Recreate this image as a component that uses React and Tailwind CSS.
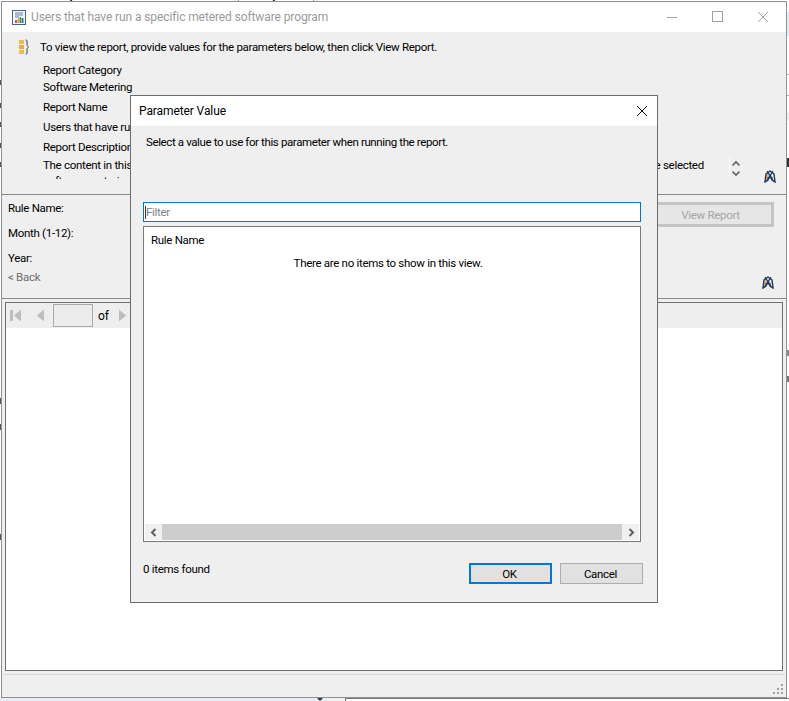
function MapIcon({ className }) {
  return (
    <svg viewBox="0 0 12 13" width="12" height="13" className={className}>
      <path d="M1 12 L3 2 L5 2 L3 12 Z" fill="#eeb050" />
      <path d="M7 4 L10 11 L8 11 Z" fill="#eeb050" />
      <path d="M1 12 L2 4 L6 1 L10 4 L11 12 L8 10 L6 5 L4 10 Z" stroke="#1d3868" strokeWidth="1.4" fill="none" />
      <path d="M3 1 L9 11 M9 1 L3 11 M3 8 H9" stroke="#1d3868" strokeWidth="1.1" fill="none" />
    </svg>
  );
}

function Tri({ dir, color = "#bdbdbd", bar }) {
  return (
    <svg width="12" height="13" viewBox="0 0 12 13" className="shrink-0">
      {bar && <rect x="0" y="1" width="3" height="11" fill={color} />}
      {dir === "left" ? <path d="M11 0.5 V12.5 L4 6.5 Z" fill={color} /> : <path d="M2 0.5 V12.5 L9 6.5 Z" fill={color} />}
    </svg>
  );
}

function ScrollArrow({ dir }) {
  return (
    <div className="w-[17px] h-[16px] flex items-center justify-center bg-[#f0f0f0]">
      <svg width="8" height="9" viewBox="0 0 8 9">
        <path d={dir === "left" ? "M5.5 1 L2 4.5 L5.5 8" : "M2.5 1 L6 4.5 L2.5 8"} stroke="#606060" strokeWidth="2" fill="none" />
      </svg>
    </div>
  );
}

export default function App() {
  return (
    <div className="relative w-[789px] h-[701px] overflow-hidden bg-white text-[11.5px] leading-[16px] text-black font-['Roboto','Liberation_Sans',sans-serif] tracking-[-0.3px]">
      {/* fragments of the page behind the window */}
      <span className="absolute left-[55px] top-[-12px] text-[13px] font-medium">Report Area</span>
      <span className="absolute left-[253px] top-[-12px] text-[13px] font-medium">Properties</span>
      <div className="absolute left-[238px] top-0 w-px h-px bg-[#999]" />
      <div className="absolute left-[313px] top-0 w-px h-px bg-[#999]" />
      <div className="absolute left-0 top-[80px] w-px h-[5px] bg-[#555]" />
      <div className="absolute left-0 top-[103px] w-px h-[5px] bg-[#555]" />
      <div className="absolute left-0 top-[122px] w-px h-[5px] bg-[#555]" />
      <div className="absolute left-0 top-[143px] w-px h-[5px] bg-[#555]" />
      <div className="absolute left-0 top-[162px] w-px h-[5px] bg-[#555]" />
      <div className="absolute left-0 top-[398px] w-px h-[6px] bg-[#555]" />
      <div className="absolute left-0 top-[424px] w-px h-[6px] bg-[#555]" />
      <div className="absolute left-0 top-[534px] w-px h-[6px] bg-[#555]" />
      <div className="absolute left-[787px] top-[12px] w-[2px] h-[24px] bg-[#e4edf6]" />
      <div className="absolute left-[787px] top-[74px] w-[2px] h-px bg-[#b0b0b0]" />
      <div className="absolute left-[787px] top-[95px] w-[2px] h-px bg-[#b0b0b0]" />
      <div className="absolute left-[787px] top-[113px] w-[2px] h-[8px] bg-[#f0f0f0]" />
      <div className="absolute left-[787px] top-[158px] w-[2px] h-[9px] bg-[#333]" />
      <div className="absolute left-[787px] top-[350px] w-[2px] h-[6px] bg-[#888]" />
      <div className="absolute left-[787px] top-[376px] w-[2px] h-[6px] bg-[#777]" />
      <div className="absolute left-0 top-[697px] w-[327px] h-[4px] bg-[#e6eef7]" />
      <div className="absolute left-[327px] top-[697px] w-[18px] h-[4px] bg-[#f0f0f0]" />
      <div className="absolute left-[345px] top-[698px] w-[444px] h-[3px] border-t border-l border-[#777] bg-white" />
      <svg width="8" height="4" viewBox="0 0 8 4" className="absolute left-[316px] top-[697px]"><path d="M0 0H8L4 4Z" fill="#333" /></svg>

      <div className="relative w-[786px] h-[697px] mt-px ml-px border border-[#8e9195] bg-[#efefef] flex flex-col">
        {/* title bar */}
        <div className="h-[30px] bg-white flex items-center shrink-0">
          <svg width="16" height="17" viewBox="0 0 16 17" className="ml-[9px] mr-[4px]">
            <rect x="1.5" y="1.5" width="13" height="14" fill="#f4f7fb" stroke="#46658c" />
            <path d="M4 4h8M4 6h8M4 8h4" stroke="#6d7f98" />
            <rect x="8.5" y="8" width="1.5" height="6" fill="#3c9a3c" />
            <rect x="4" y="11" width="2" height="3" fill="#d05050" />
            <rect x="6.5" y="9.5" width="1.5" height="4.5" fill="#e0a030" />
            <rect x="10.5" y="9" width="2" height="5" fill="#3a70c0" />
          </svg>
          <span className="text-[#9a9a9a] text-[12px] tracking-[-0.1px]">Users that have run a specific metered software program</span>
          <div className="ml-auto flex items-center">
            <svg width="12" height="12" viewBox="0 0 12 12" className="mr-[34px]"><path d="M1 6.5H11" stroke="#a0a0a0" /></svg>
            <svg width="12" height="12" viewBox="0 0 12 12" className="mr-[33px]"><rect x=".5" y=".5" width="10" height="10" stroke="#a0a0a0" fill="none" /></svg>
            <svg width="12" height="12" viewBox="0 0 12 12" className="mr-[17px]"><path d="M1 1L11 11M11 1L1 11" stroke="#a0a0a0" /></svg>
          </div>
        </div>

        {/* report info */}
        <div className="h-[163px] border-b border-[#8a8a8a] shrink-0 relative">
          <div className="flex items-center pt-[7px] pl-[17px]">
            <svg width="12" height="16" viewBox="0 0 12 16" className="mr-[9px]">
              <rect x="0" y="1" width="5" height="4" fill="#eebb55" />
              <rect x="0" y="6" width="5" height="4" fill="#f2a93a" />
              <rect x="0" y="11" width="5" height="4" fill="#eebb55" />
              <path d="M6.5 1c2 0 1.5 1 1.5 3s0 3 1.5 4c-1.5 1-1.5 2-1.5 4s.5 3-1.5 3" stroke="#303a50" fill="none" />
            </svg>
            <span>To view the report, provide values for the parameters below, then click View Report.</span>
          </div>
          <div className="pl-[41px] pt-[7px]">
            <div>Report Category</div>
            <div className="mt-[1px]">Software Metering</div>
            <div className="mt-[4px]">Report Name</div>
            <div className="mt-[4px]">Users that have run a specific metered software program</div>
            <div className="mt-[4px]">Report Description</div>
            <div className="mt-[2px] h-[22px] overflow-hidden w-[680px] whitespace-nowrap">
              The content in this report shows all the users in the organization that have run the software program which is associated with the selected<br />
              software metering rule
            </div>
          </div>
          <div className="absolute left-[727px] top-[126px] w-px h-[19px] bg-white" />
          <svg width="10" height="18" viewBox="0 0 10 18" className="absolute left-[729px] top-[128px]">
            <path d="M1.5 5.5L5 2L8.5 5.5M1.5 11.5L5 15L8.5 11.5" stroke="#606060" strokeWidth="1.6" fill="none" />
          </svg>
          <MapIcon className="absolute left-[762px] top-[138px]" />
        </div>

        {/* parameters */}
        <div className="h-[104px] border-b border-[#8a8a8a] shrink-0 relative pl-[6px] pt-[5px]">
          <div>Rule Name:</div>
          <div className="mt-[9px]">Month (1-12):</div>
          <div className="mt-[9px]">Year:</div>
          <div className="mt-[3px] text-[#6e6e6e]">&lt; Back</div>
          <div className="absolute left-[653px] top-[7px] w-[119px] h-[25px] border-[3px] border-[#c4c4c4] bg-[#e6e6e6] flex items-center justify-center pr-[8px] text-[#a5a5a5]">View Report</div>
          <MapIcon className="absolute left-[760px] top-[81px]" />
        </div>

        {/* viewer */}
        <div className="mt-[3px] mx-[3px] h-[369px] border border-[#6f6f6f] bg-white flex flex-col shrink-0">
          <div className="h-[25px] bg-[#eeeeee] flex items-center pl-[4px] shrink-0">
            <Tri dir="left" bar />
            <span className="w-[11px]" />
            <Tri dir="left" />
            <div className="ml-[8px] w-[40px] h-[23px] bg-[#ececec] border border-[#aaaaaa]" />
            <span className="ml-[5px] text-[12px] tracking-[0px]">of</span>
            <span className="w-[8px]" />
            <Tri dir="right" />
          </div>
        </div>

        {/* status bar */}
        <div className="flex-1 mx-[1px] mt-[3px] border-t border-[#d9d9d9] relative">
          <svg width="12" height="12" viewBox="0 0 12 12" className="absolute right-[1px] bottom-[2px]">
            <path d="M9 1h2v2H9zM5 5h2v2H5zM9 5h2v2H9zM1 9h2v2H1zM5 9h2v2H5zM9 9h2v2H9z" fill="#a0a0a0" />
          </svg>
        </div>
      </div>

      {/* modal */}
      <div className="absolute left-[130px] top-[95px] w-[528px] h-[508px] border border-[#6c6c6c] bg-[#efefef] flex flex-col">
        <div className="h-[30px] bg-white flex items-center justify-between pl-[8px] pr-[9px] shrink-0">
          <span className="text-[12px] tracking-[-0.1px]">Parameter Value</span>
          <svg width="12" height="12" viewBox="0 0 12 12"><path d="M1 1L11 11M11 1L1 11" stroke="#111" /></svg>
        </div>
        <div className="pl-[15px] pt-[8px] h-[76px] tracking-[-0.38px]">Select a value to use for this parameter when running the report.</div>
        <div className="ml-[12px] w-[498px] h-[20px] border border-[#0078d7] bg-white flex items-center pl-[1px] text-[#808080] shrink-0">
          <span className="w-px h-[13px] bg-[#333]" /><span>Filter</span>
        </div>
        <div className="ml-[12px] mt-[4px] w-[498px] h-[316px] border border-[#7a7a7a] bg-white flex flex-col shrink-0">
          <div className="pl-[7px] pt-[5px]">Rule Name</div>
          <div className="text-center mt-[7px] pr-[8px]">There are no items to show in this view.</div>
          <div className="mt-auto mx-[1px] mb-[1px] flex bg-[#f0f0f0]">
            <ScrollArrow dir="left" />
            <div className="flex-1 bg-[#cdcdcd]" />
            <ScrollArrow dir="right" />
          </div>
        </div>
        <div className="flex flex-1 pl-[12px] pr-[14px] pt-[19px] items-start">
          <span>0 items found</span>
          <button className="ml-auto mt-[2px] w-[83px] h-[21px] border-2 border-[#0078d7] bg-[#e1e1e1] flex items-center justify-center pr-[2px]">OK</button>
          <button className="ml-[8px] mt-[2px] w-[83px] h-[21px] border border-[#adadad] bg-[#e1e1e1] flex items-center justify-center pr-[2px]">Cancel</button>
        </div>
      </div>
    </div>
  );
}
